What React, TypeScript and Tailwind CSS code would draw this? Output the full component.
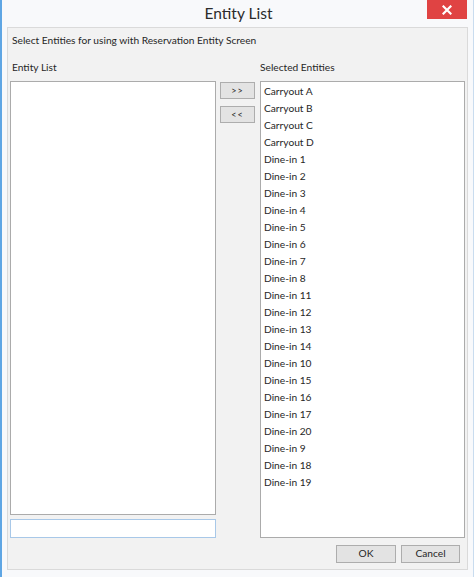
import React from "react";

const items = [
  "Carryout A", "Carryout B", "Carryout C", "Carryout D",
  "Dine-in 1", "Dine-in 2", "Dine-in 3", "Dine-in 4", "Dine-in 5", "Dine-in 6",
  "Dine-in 7", "Dine-in 8", "Dine-in 11", "Dine-in 12", "Dine-in 13", "Dine-in 14",
  "Dine-in 10", "Dine-in 15", "Dine-in 16", "Dine-in 17", "Dine-in 20", "Dine-in 9",
  "Dine-in 18", "Dine-in 19",
];

const font = { fontFamily: 'Lato, "Open Sans", "Liberation Sans", sans-serif' };

export default function App() {
  return (
    <div
      className="w-[474px] h-[577px] bg-[#f8f9fb] border-l-[2px] border-r border-[#5fa6e4] border-r-[#c9dcef] flex flex-col text-[#262626] overflow-hidden"
      style={font}
    >
      <div className="relative h-[27px] flex items-center justify-center shrink-0">
        <span className="text-[15.5px] text-[#2b2b2b] leading-none pl-[2px]">Entity List</span>
        <div className="absolute top-0 right-[6px] w-[40px] h-[19px] bg-[#e04343] flex items-center justify-center">
          <svg width="10" height="10" viewBox="0 0 10 10">
            <path d="M1.5 1.5 L8.5 8.5 M8.5 1.5 L1.5 8.5" stroke="#ffffff" strokeWidth="2.2" strokeLinecap="square" />
          </svg>
        </div>
      </div>
      <div className="ml-[5px] w-[461px] h-[543px] border border-[#dadada] bg-[#f2f2f2] flex flex-col px-[2px] text-[10.2px]">
        <div className="h-[26px] flex items-center pl-[2px]">Select Entities for using with Reservation Entity Screen</div>
        <div className="h-[27px] flex items-center">
          <div className="w-[206px] pl-[2px]">Entity List</div>
          <div className="w-[44px]" />
          <div className="pl-[0px]">Selected Entities</div>
        </div>
        <div className="h-[457px] flex">
          <div className="w-[206px] flex flex-col">
            <div className="h-[434px] border border-[#ababab] bg-white" />
            <div className="mt-[4px] h-[19px] border border-[#a8c8e8] bg-white" />
          </div>
          <div className="ml-[4px] w-[35px] flex flex-col pt-[1px] gap-[7px]">
            <div className="h-[17px] border border-[#adadad] bg-[#e3e3e3] flex items-center justify-center text-[9px] leading-none tracking-[1px]">&gt;&gt;</div>
            <div className="h-[17px] border border-[#adadad] bg-[#e3e3e3] flex items-center justify-center text-[9px] leading-none tracking-[1px]">&lt;&lt;</div>
          </div>
          <div className="ml-[5px] w-[205px] border border-[#ababab] bg-white pt-[1px] pl-[3px]">
            {items.map((t) => (
              <div key={t} className="h-[17px] leading-[17px] whitespace-nowrap">{t}</div>
            ))}
          </div>
        </div>
        <div className="mt-[7px] flex justify-end gap-[5px] pr-[5px]">
          <div className="w-[60px] h-[18px] border border-[#adadad] bg-[#e3e3e3] flex items-center justify-center">OK</div>
          <div className="w-[59px] h-[18px] border border-[#adadad] bg-[#e3e3e3] flex items-center justify-center">Cancel</div>
        </div>
      </div>
    </div>
  );
}
